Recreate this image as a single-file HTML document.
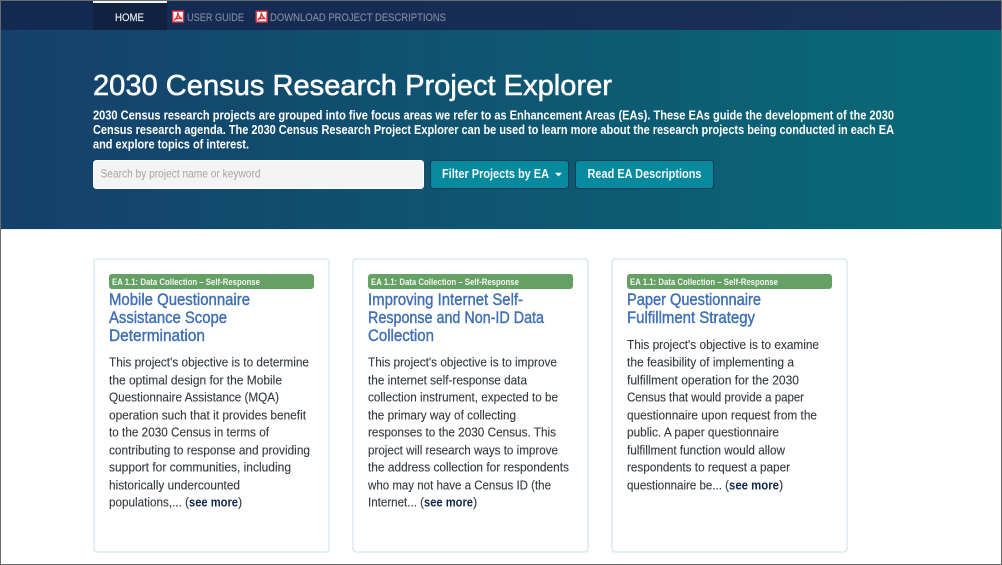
<!DOCTYPE html>
<html lang="en"><head><meta charset="utf-8"><title>2030 Census Research Project Explorer</title>
<style>
html,body{margin:0;padding:0;background:#fff;width:1002px;height:565px;overflow:hidden}
svg{display:block;position:absolute;left:0;top:0}
text{font-family:"Liberation Sans",sans-serif;white-space:pre}
.p{font-size:12.7px;font-weight:700;fill:#fff}
.b{font-size:12.7px;fill:#343a40;stroke:#343a40;stroke-width:.12px;transform:translateY(-.5px)}
.m{font-size:12.7px;fill:#12284f;font-weight:700;transform:translateY(-.5px)}
.t{font-size:16.2px;fill:#3f6fb5;stroke:#3f6fb5;stroke-width:.4px}
.g{font-size:9.2px;font-weight:700;fill:#f4f8f2}
.n{font-size:11.2px;fill:#8189a0;stroke:#8189a0;stroke-width:.15px}
.w{font-size:12.7px;font-weight:700;fill:#f1f8fa}
.c{fill:#fff;stroke:#d2e7ee;stroke-width:1.3px}
</style></head><body>
<svg width="1002" height="565" viewBox="0 0 1002 565" xmlns="http://www.w3.org/2000/svg">
<defs>
<linearGradient id="h" x1="0" y1="0" x2="1" y2="0"><stop offset="0" stop-color="#15406b"/><stop offset="1" stop-color="#086b78"/></linearGradient>
<linearGradient id="nv" x1="0" y1="0" x2="1" y2="0"><stop offset="0" stop-color="#122a52"/><stop offset="1" stop-color="#1a3059"/></linearGradient>
<g id="pdf"><rect x=".7" y=".7" width="10.8" height="10.8" fill="#fff" stroke="#e8303a" stroke-width="1.400"/><path d="M5.800 2C6 4.800 4.800 7.500 2.200 9.800M5.800 2C6 5 7.600 7 10 8.400C8 7.800 5.600 7.600 3 8.800" fill="none" stroke="#e8303a" stroke-width="1.500"/></g>
</defs>
<rect width="1002" height="565" fill="#fff"/>
<rect x="0" y="0" width="1002" height="30" fill="url(#nv)"/>
<rect x="93" y="2" width="74" height="28" fill="#10223f"/>
<rect x="93" y="1" width="74" height="2" fill="#f4f4f4"/>
<text x="115" y="21" class="n" style="fill:#e8ecf2;stroke:#e8ecf2" textLength="29" lengthAdjust="spacingAndGlyphs">HOME</text>
<use href="#pdf" x="172" y="10.500"/>
<text x="187" y="21" class="n" textLength="57" lengthAdjust="spacingAndGlyphs">USER GUIDE</text>
<use href="#pdf" x="255.500" y="10.500"/>
<text x="270" y="21" class="n" textLength="176" lengthAdjust="spacingAndGlyphs">DOWNLOAD PROJECT DESCRIPTIONS</text>

<rect x="0" y="30" width="1002" height="199" fill="url(#h)"/>
<rect x="0" y="229" width="1002" height="1" fill="#e2eef3"/>
<text x="93" y="95" style="font-size:29px;fill:#fff;stroke:#fff;stroke-width:.55px" textLength="519" lengthAdjust="spacingAndGlyphs">2030 Census Research Project Explorer</text>
<text x="93" y="119.500" class="p" textLength="801" lengthAdjust="spacingAndGlyphs">2030 Census research projects are grouped into five focus areas we refer to as Enhancement Areas (EAs). These EAs guide the development of the 2030</text>
<text x="93" y="134" class="p" textLength="801" lengthAdjust="spacingAndGlyphs">Census research agenda. The 2030 Census Research Project Explorer can be used to learn more about the research projects being conducted in each EA</text>
<text x="93" y="148.500" class="p" textLength="156" lengthAdjust="spacingAndGlyphs">and explore topics of interest.</text>

<rect x="93.500" y="160.500" width="330" height="28" rx="3" fill="#f4f4f4" stroke="#fff"/>
<text x="100.500" y="177.500" style="font-size:11.7px;fill:#a5a5a5" textLength="160" lengthAdjust="spacingAndGlyphs">Search by project name or keyword</text>
<rect x="430.500" y="160.500" width="138" height="28" rx="3" fill="#088a9e" stroke="#0d3f59"/>
<text x="442" y="178" class="w" textLength="107" lengthAdjust="spacingAndGlyphs">Filter Projects by EA</text>
<path d="M555 172.800h7l-3.500 3.700z" fill="#f1f8fa"/>
<rect x="575.500" y="160.500" width="138" height="28" rx="3" fill="#088a9e" stroke="#0d3f59"/>
<text x="587.500" y="178" class="w" textLength="114" lengthAdjust="spacingAndGlyphs">Read EA Descriptions</text>

<!-- card 1 -->
<rect x="94" y="259" width="235" height="293" rx="3" class="c"/>
<rect x="109" y="274" width="205" height="15" rx="3" fill="#65a065"/>
<text x="112" y="285" class="g" textLength="148" lengthAdjust="spacingAndGlyphs">EA 1.1: Data Collection – Self-Response</text>
<text x="109" y="305" class="t" textLength="141" lengthAdjust="spacingAndGlyphs">Mobile Questionnaire</text>
<text x="109" y="323" class="t" textLength="118" lengthAdjust="spacingAndGlyphs">Assistance Scope</text>
<text x="109" y="341" class="t" textLength="96" lengthAdjust="spacingAndGlyphs">Determination</text>
<text x="109" y="367" class="b" textLength="200" lengthAdjust="spacingAndGlyphs">This project's objective is to determine</text>
<text x="109" y="385" class="b" textLength="173" lengthAdjust="spacingAndGlyphs">the optimal design for the Mobile</text>
<text x="109" y="402" class="b" textLength="170" lengthAdjust="spacingAndGlyphs">Questionnaire Assistance (MQA)</text>
<text x="109" y="420" class="b" textLength="197" lengthAdjust="spacingAndGlyphs">operation such that it provides benefit</text>
<text x="109" y="437" class="b" textLength="160" lengthAdjust="spacingAndGlyphs">to the 2030 Census in terms of</text>
<text x="109" y="455" class="b" textLength="201" lengthAdjust="spacingAndGlyphs">contributing to response and providing</text>
<text x="109" y="472" class="b" textLength="182" lengthAdjust="spacingAndGlyphs">support for communities, including</text>
<text x="109" y="490" class="b" textLength="131" lengthAdjust="spacingAndGlyphs">historically undercounted</text>
<text x="109" y="507" class="b" textLength="80" lengthAdjust="spacingAndGlyphs">populations,... (</text>
<text x="189" y="507" class="m" textLength="49" lengthAdjust="spacingAndGlyphs">see more</text>
<text x="238" y="507" class="b">)</text>

<!-- card 2 -->
<rect x="353" y="259" width="235" height="293" rx="3" class="c"/>
<rect x="368" y="274" width="205" height="15" rx="3" fill="#65a065"/>
<text x="371" y="285" class="g" textLength="148" lengthAdjust="spacingAndGlyphs">EA 1.1: Data Collection – Self-Response</text>
<text x="368" y="305" class="t" textLength="155" lengthAdjust="spacingAndGlyphs">Improving Internet Self-</text>
<text x="368" y="323" class="t" textLength="176" lengthAdjust="spacingAndGlyphs">Response and Non-ID Data</text>
<text x="368" y="341" class="t" textLength="66" lengthAdjust="spacingAndGlyphs">Collection</text>
<text x="368" y="367" class="b" textLength="189" lengthAdjust="spacingAndGlyphs">This project's objective is to improve</text>
<text x="368" y="385" class="b" textLength="159" lengthAdjust="spacingAndGlyphs">the internet self-response data</text>
<text x="368" y="402" class="b" textLength="190" lengthAdjust="spacingAndGlyphs">collection instrument, expected to be</text>
<text x="368" y="420" class="b" textLength="148" lengthAdjust="spacingAndGlyphs">the primary way of collecting</text>
<text x="368" y="437" class="b" textLength="188" lengthAdjust="spacingAndGlyphs">responses to the 2030 Census. This</text>
<text x="368" y="455" class="b" textLength="190" lengthAdjust="spacingAndGlyphs">project will research ways to improve</text>
<text x="368" y="472" class="b" textLength="201" lengthAdjust="spacingAndGlyphs">the address collection for respondents</text>
<text x="368" y="490" class="b" textLength="183" lengthAdjust="spacingAndGlyphs">who may not have a Census ID (the</text>
<text x="368" y="507" class="b" textLength="56" lengthAdjust="spacingAndGlyphs">Internet... (</text>
<text x="424" y="507" class="m" textLength="49" lengthAdjust="spacingAndGlyphs">see more</text>
<text x="473" y="507" class="b">)</text>

<!-- card 3 -->
<rect x="612" y="259" width="235" height="293" rx="3" class="c"/>
<rect x="627" y="274" width="205" height="15" rx="3" fill="#65a065"/>
<text x="630" y="285" class="g" textLength="148" lengthAdjust="spacingAndGlyphs">EA 1.1: Data Collection – Self-Response</text>
<text x="627" y="305" class="t" textLength="134" lengthAdjust="spacingAndGlyphs">Paper Questionnaire</text>
<text x="627" y="323" class="t" textLength="128" lengthAdjust="spacingAndGlyphs">Fulfillment Strategy</text>
<text x="627" y="349.500" class="b" textLength="192" lengthAdjust="spacingAndGlyphs">This project's objective is to examine</text>
<text x="627" y="367" class="b" textLength="167" lengthAdjust="spacingAndGlyphs">the feasibility of implementing a</text>
<text x="627" y="385" class="b" textLength="172" lengthAdjust="spacingAndGlyphs">fulfillment operation for the 2030</text>
<text x="627" y="402" class="b" textLength="177" lengthAdjust="spacingAndGlyphs">Census that would provide a paper</text>
<text x="627" y="420" class="b" textLength="190" lengthAdjust="spacingAndGlyphs">questionnaire upon request from the</text>
<text x="627" y="437" class="b" textLength="152" lengthAdjust="spacingAndGlyphs">public. A paper questionnaire</text>
<text x="627" y="455" class="b" textLength="158" lengthAdjust="spacingAndGlyphs">fulfillment function would allow</text>
<text x="627" y="472" class="b" textLength="163" lengthAdjust="spacingAndGlyphs">respondents to request a paper</text>
<text x="627" y="490" class="b" textLength="102" lengthAdjust="spacingAndGlyphs">questionnaire be... (</text>
<text x="729" y="490" class="m" textLength="50" lengthAdjust="spacingAndGlyphs">see more</text>
<text x="779" y="490" class="b">)</text>

<rect x=".5" y=".5" width="1001" height="564" fill="none" stroke="#6b6b6b"/>
</svg>
</body></html>
